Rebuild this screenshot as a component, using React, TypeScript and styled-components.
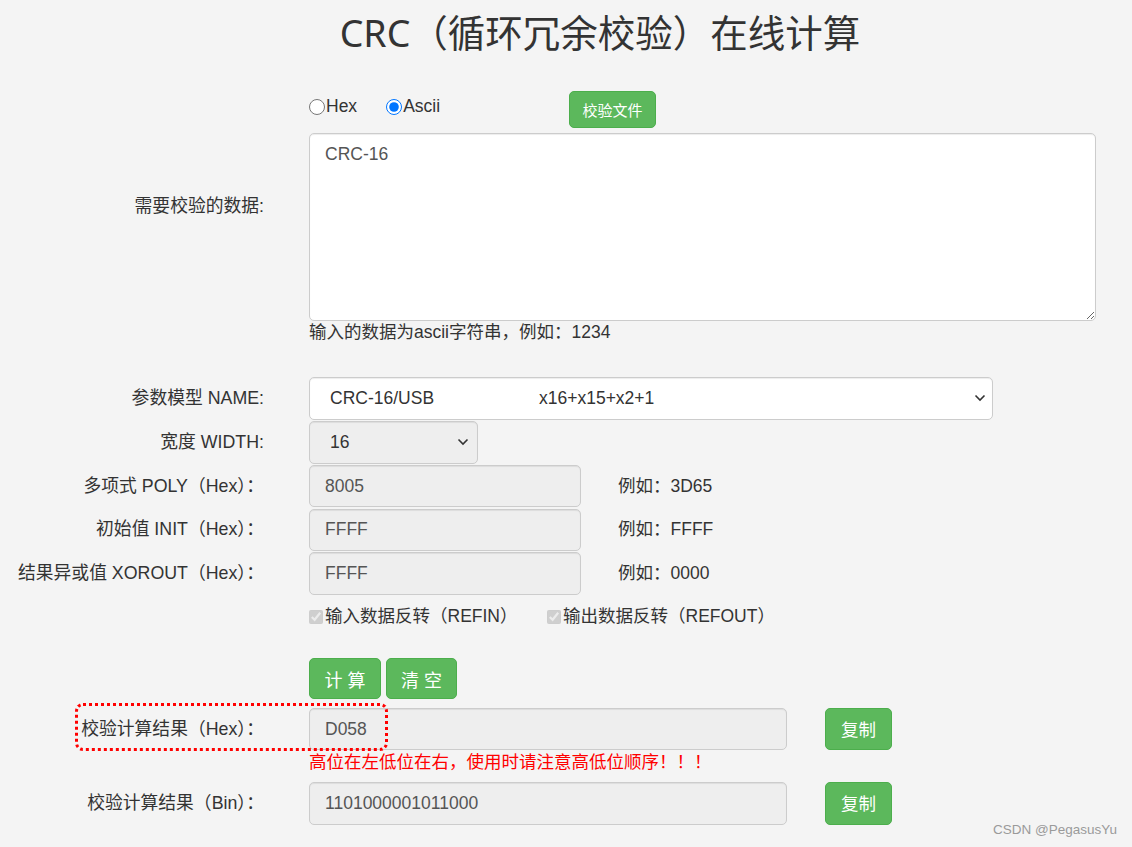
import React from 'react';
import styled, { createGlobalStyle } from 'styled-components';

const colors = {
  page: '#f4f4f4',
  text: '#333333',
  inputText: '#555555',
  border: '#cccccc',
  disabled: '#eeeeee',
  green: '#5cb85c',
  greenBorder: '#4cae4c',
  red: '#ff0000',
};

const GlobalStyle = createGlobalStyle`
  html, body {
    margin: 0;
    padding: 0;
    background: ${colors.page};
  }
  body {
    font-family: 'Liberation Sans', 'Noto Sans CJK SC', sans-serif;
    font-size: 17.5px;
    line-height: 25px;
    color: ${colors.text};
  }
  * {
    box-sizing: border-box;
  }
`;

const Page = styled.div`
  position: relative;
  min-height: 847px;
  overflow: hidden;
  padding-top: 12px;
`;

const Title = styled.h2`
  margin: 0;
  padding-left: 68px;
  text-align: center;
  font-family: 'Noto Sans', 'Noto Sans CJK SC', sans-serif;
  font-weight: 400;
  font-size: 37.5px;
  line-height: 41px;
  color: ${colors.text};
`;

const Form = styled.form`
  display: flex;
  flex-direction: column;
  margin-top: 38px;
`;

const FieldRow = styled.div<{ $mt?: number }>`
  position: relative;
  display: grid;
  grid-template-columns: 264px 1fr;
  column-gap: 45px;
  align-items: center;
  margin-top: ${({ $mt }) => $mt ?? 0}px;
`;

const Label = styled.label`
  text-align: right;
  white-space: nowrap;
  color: ${colors.text};
  font-size: 17.8px;
`;

const Field = styled.div`
  display: flex;
  flex-direction: column;
  align-items: flex-start;
`;

const InlineField = styled.div`
  display: flex;
  align-items: center;
`;

const RadioBar = styled.div`
  display: flex;
  align-items: flex-start;
`;

const RadioGroup = styled.div`
  display: flex;
  width: 260px;
  padding-top: 3px;
`;

const RadioLabel = styled.label`
  display: flex;
  align-items: center;
  margin-right: 29px;
  cursor: pointer;

  input {
    width: 16px;
    height: 16px;
    margin: 0 1px 0 0;
  }
`;

const Button = styled.button<{ $size?: 'sm' | 'md' | 'lg' }>`
  display: inline-flex;
  align-items: center;
  justify-content: center;
  border: 1px solid ${colors.greenBorder};
  border-radius: 5px;
  background: ${colors.green};
  color: #fff;
  font-family: 'Liberation Sans', 'Noto Sans CJK SC', sans-serif;
  cursor: pointer;
  ${({ $size }) =>
    $size === 'sm'
      ? `
    height: 37px;
    padding: 0 12.5px;
    font-size: 15px;
  `
      : $size === 'lg'
      ? `
    height: 41.5px;
    padding: 0 9px 0 14.5px;
    font-size: 18px;
    letter-spacing: 5px;
  `
      : `
    height: 42.5px;
    padding: 0 15px 2px;
    font-size: 17.5px;
  `}
`;

const TextArea = styled.textarea`
  width: 787px;
  height: 188px;
  margin-top: 5px;
  padding: 7.5px 15px;
  border: 1px solid ${colors.border};
  border-radius: 5px;
  background: #fff;
  color: ${colors.inputText};
  font-family: 'Liberation Sans', 'Noto Sans CJK SC', sans-serif;
  font-size: 17.5px;
  line-height: 25px;
  box-shadow: inset 0 1px 1px rgba(0, 0, 0, 0.075);
  resize: both;
  outline: none;
`;

const HelpText = styled.div<{ $warn?: boolean }>`
  color: ${({ $warn }) => ($warn ? colors.red : colors.text)};
  line-height: 22px;
`;

const SelectBox = styled.div<{ $w: number; $disabled?: boolean }>`
  display: flex;
  align-items: center;
  width: ${({ $w }) => $w}px;
  height: 42.5px;
  padding: 0 ${({ $disabled }) => ($disabled ? 8 : 6)}px 0 20px;
  border: 1px solid ${colors.border};
  border-radius: 5px;
  background: ${({ $disabled }) => ($disabled ? colors.disabled : '#fff')};
  color: ${colors.text};
  box-shadow: inset 0 1px 1px rgba(0, 0, 0, 0.075);
  cursor: default;

  svg {
    margin-left: auto;
    flex: none;
  }
`;

const OptionName = styled.span`
  display: inline-block;
  width: 209px;
`;

const Input = styled.input<{ $w: number }>`
  width: ${({ $w }) => $w}px;
  height: 42.5px;
  padding: 0 15px;
  border: 1px solid ${colors.border};
  border-radius: 5px;
  background: ${colors.disabled};
  color: ${colors.inputText};
  font-family: 'Liberation Sans', 'Noto Sans CJK SC', sans-serif;
  font-size: 17.5px;
  box-shadow: inset 0 1px 1px rgba(0, 0, 0, 0.075);
  outline: none;
`;

const Hint = styled.span`
  margin-left: 37px;
  color: ${colors.text};
`;

const CheckRow = styled.div`
  display: grid;
  grid-template-columns: 238px auto;
  align-items: center;
  height: 40px;
`;

const CheckLabel = styled.label`
  display: flex;
  align-items: center;
  white-space: nowrap;

  input {
    width: 14px;
    height: 14px;
    margin: 0 2px 0 0;
  }
`;

const ButtonGroup = styled.div`
  display: flex;
  gap: 5px;
`;

const CopyButton = styled(Button)`
  margin-left: 38px;
`;

const Highlight = styled.span`
  position: absolute;
  left: 75px;
  top: -5px;
  width: 313px;
  height: 48px;
  border: 3.5px dotted ${colors.red};
  border-radius: 8px;
  pointer-events: none;
`;

const Watermark = styled.div`
  position: absolute;
  right: 15px;
  bottom: 7px;
  font-size: 13.5px;
  line-height: 20px;
  color: #9a9a9a;
`;

const Chevron = () => (
  <svg width="12" height="8" viewBox="0 0 12 8">
    <path d="M1.5 1.5 6 6l4.5-4.5" fill="none" stroke="#333" strokeWidth="1.6" />
  </svg>
);

const params = [
  { label: '多项式 POLY（Hex）：', value: '8005', hint: '例如：3D65' },
  { label: '初始值 INIT（Hex）：', value: 'FFFF', hint: '例如：FFFF' },
  { label: '结果异或值 XOROUT（Hex）：', value: 'FFFF', hint: '例如：0000' },
];

export default function App() {
  return (
    <Page>
      <GlobalStyle />
      <Title>CRC（循环冗余校验）在线计算</Title>
      <Form onSubmit={(e) => e.preventDefault()}>
        <FieldRow>
          <Label>需要校验的数据:</Label>
          <Field>
            <RadioBar>
              <RadioGroup>
                <RadioLabel>
                  <input type="radio" name="mode" />
                  Hex
                </RadioLabel>
                <RadioLabel>
                  <input type="radio" name="mode" defaultChecked />
                  Ascii
                </RadioLabel>
              </RadioGroup>
              <Button type="button" $size="sm">
                校验文件
              </Button>
            </RadioBar>
            <TextArea defaultValue="CRC-16" />
          </Field>
        </FieldRow>
        <FieldRow>
          <span />
          <HelpText>输入的数据为ascii字符串，例如：1234</HelpText>
        </FieldRow>

        <FieldRow $mt={34}>
          <Label>参数模型 NAME:</Label>
          <Field>
            <SelectBox $w={684}>
              <OptionName>CRC-16/USB</OptionName>
              <span>x16+x15+x2+1</span>
              <Chevron />
            </SelectBox>
          </Field>
        </FieldRow>
        <FieldRow $mt={1.5}>
          <Label>宽度 WIDTH:</Label>
          <Field>
            <SelectBox $w={169} $disabled>
              <span>16</span>
              <Chevron />
            </SelectBox>
          </Field>
        </FieldRow>
        {params.map((p) => (
          <FieldRow $mt={1.25} key={p.label}>
            <Label>{p.label}</Label>
            <InlineField>
              <Input $w={272} defaultValue={p.value} disabled />
              <Hint>{p.hint}</Hint>
            </InlineField>
          </FieldRow>
        ))}

        <FieldRow $mt={2}>
          <span />
          <CheckRow>
            <CheckLabel>
              <input type="checkbox" defaultChecked disabled />
              输入数据反转（REFIN）
            </CheckLabel>
            <CheckLabel>
              <input type="checkbox" defaultChecked disabled />
              输出数据反转（REFOUT）
            </CheckLabel>
          </CheckRow>
        </FieldRow>

        <FieldRow $mt={21}>
          <span />
          <ButtonGroup>
            <Button type="button" $size="lg">
              计算
            </Button>
            <Button type="button" $size="lg">
              清空
            </Button>
          </ButtonGroup>
        </FieldRow>

        <FieldRow $mt={8.5}>
          <Label>校验计算结果（Hex）：</Label>
          <InlineField>
            <Input $w={478} defaultValue="D058" readOnly />
            <CopyButton type="button">复制</CopyButton>
          </InlineField>
          <Highlight />
        </FieldRow>
        <FieldRow $mt={1}>
          <span />
          <HelpText $warn>高位在左低位在右，使用时请注意高低位顺序！！！</HelpText>
        </FieldRow>
        <FieldRow $mt={9}>
          <Label>校验计算结果（Bin）：</Label>
          <InlineField>
            <Input $w={478} defaultValue="1101000001011000" readOnly />
            <CopyButton type="button">复制</CopyButton>
          </InlineField>
        </FieldRow>
      </Form>
      <Watermark>CSDN @PegasusYu</Watermark>
    </Page>
  );
}
